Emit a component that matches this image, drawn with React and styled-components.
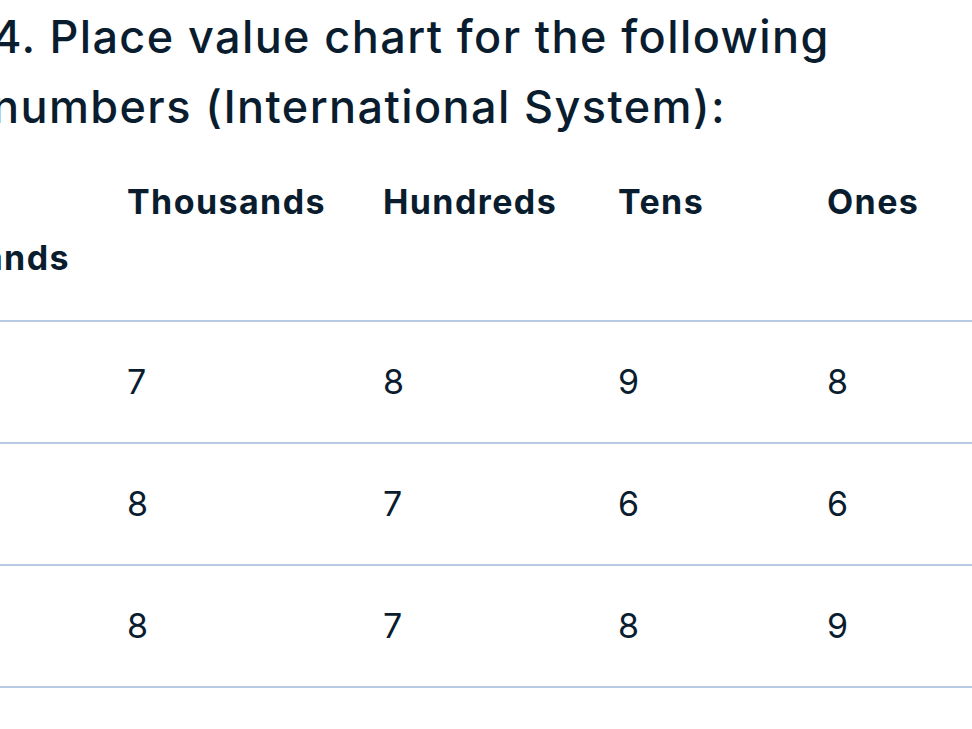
import React from 'react'
import styled, { createGlobalStyle } from 'styled-components'

const GlobalStyle = createGlobalStyle`
  html, body {
    margin: 0;
    padding: 0;
    background: #ffffff;
  }
  body {
    font-family: 'Inter', 'Noto Sans', sans-serif;
    color: #0a1d2f;
    overflow: hidden;
  }
`

const rows = [
  ['6', '7', '8', '9', '8'],
  ['5', '8', '7', '6', '6'],
  ['4', '8', '7', '8', '9'],
]

const headings = ['Ten Thousands', 'Thousands', 'Hundreds', 'Tens', 'Ones']
const widths = [256, 256, 235, 209, 260]

function App() {
  return (
    <>
      <GlobalStyle />
      <Page>
        <Title>4. Place value chart for the following numbers (International System):</Title>
        <TableScroll>
          <Table>
            <colgroup>
              {widths.map((w, i) => <col key={i} style={{ width: w }} />)}
            </colgroup>
            <thead>
              <tr>
                {headings.map((h) => <Th key={h}>{h}</Th>)}
              </tr>
            </thead>
            <tbody>
              {rows.map((row, r) => (
                <tr key={r}>
                  {row.map((cell, c) => <Td key={c}>{cell}</Td>)}
                </tr>
              ))}
            </tbody>
          </Table>
        </TableScroll>
      </Page>
    </>
  )
}

export default App

const Page = styled.div`
  width: 972px;
  height: 729px;
  overflow: hidden;
  padding-top: 2px;
  box-sizing: border-box;
`
const Title = styled.h2`
  margin: 0 0 0 -8px;
  width: 900px;
  font-size: 45px;
  font-weight: 500;
  line-height: 70px;
  letter-spacing: 1.4px;
`
const TableScroll = styled.div`
  margin-left: -129px;
`
const Table = styled.table`
  border-collapse: collapse;
  table-layout: fixed;
  width: 1216px;
`
const Th = styled.th`
  text-align: left;
  vertical-align: top;
  font-size: 34px;
  font-weight: 700;
  line-height: 56px;
  letter-spacing: 1.4px;
  padding: 32px 20px 34px 0;
  border-bottom: 2px solid #b6cbe2;
`
const Td = styled.td`
  font-size: 34px;
  font-weight: 400;
  line-height: 56px;
  padding: 32px 20px 32px 0;
  border-bottom: 2px solid #b6cbe2;
`
